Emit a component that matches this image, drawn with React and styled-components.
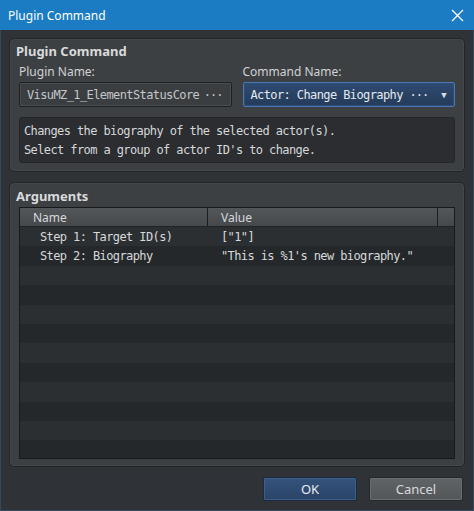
import React from 'react';
import styled, { createGlobalStyle } from 'styled-components';

const GlobalStyle = createGlobalStyle`
  html, body { margin: 0; padding: 0; background: #2f3236; }
  * { box-sizing: border-box; }
`;

const ui = `"Noto Sans", "Open Sans", "DejaVu Sans", sans-serif`;
const mono = `"DejaVu Sans Mono", "Liberation Mono", monospace`;

const Window = styled.div`
  width: 474px;
  height: 511px;
  display: flex;
  flex-direction: column;
  background: #2f3236;
  border-left: 1px solid #34495c;
  border-right: 1px solid #34495c;
  border-bottom: 1px solid #34495c;
  font-family: ${ui};
  color: #d4d6d8;
`;

const TitleBar = styled.div`
  height: 30px;
  flex: none;
  display: flex;
  align-items: center;
  justify-content: space-between;
  padding: 0 10px 0 8px;
  margin: 0 -1px;
  background: #1b7cc3;
  color: #ffffff;
  font-size: 12px;
`;

const Body = styled.div`
  flex: 1;
  display: flex;
  flex-direction: column;
  padding: 8px 8px 0 8px;
`;

const GroupBox = styled.div`
  height: ${(p) => p.h}px;
  margin-bottom: ${(p) => p.mb || 0}px;
  flex: none;
  display: flex;
  flex-direction: column;
  padding: 0 9px 7px 9px;
  background: #3d4043;
  border: 1px solid #222426;
  border-radius: 5px;
  box-shadow: inset 0 0 0 1px #45484b;
`;

const GroupTitle = styled.div`
  height: ${(p) => p.h || 22}px;
  display: flex;
  align-items: center;
  margin-left: -3px;
  padding-top: 2px;
  font-weight: 700;
  font-size: 13px;
  color: #d8dadc;
`;

const FieldRow = styled.div`
  display: flex;
  gap: 11px;
`;

const Field = styled.div`
  flex: 1;
  display: flex;
  flex-direction: column;
`;

const Label = styled.div`
  height: 21px;
  display: flex;
  align-items: center;
  font-size: 12px;
  color: #d0d2d4;
`;

const Input = styled.div`
  height: 25px;
  display: flex;
  align-items: center;
  justify-content: space-between;
  padding: 0 8px 0 7px;
  border: 1px solid ${(p) => (p.active ? '#4a78b4' : '#1f2123')};
  border-radius: 2px;
  background: ${(p) =>
    p.active
      ? 'linear-gradient(#2f4b70, #243b5a)'
      : '#3b3e41'};
  box-shadow: inset 0 0 0 1px ${(p) => (p.active ? '#2d4d78' : '#4a4d50')};
  font-family: ${mono};
  font-size: 12px;
  letter-spacing: -0.6px;
  color: ${(p) => (p.active ? '#e4e8ee' : '#c4c6c8')};
  white-space: nowrap;
`;

const Dots = styled.span`
  letter-spacing: -1px;
  color: inherit;
`;

const Arrow = styled.span`
  font-size: 9px;
  color: #d8dde5;
  margin-left: 10px;
`;

const Description = styled.div`
  margin-top: 10px;
  height: 46px;
  padding: 4px 0 0 4px;
  background: #2b2d30;
  border: 1px solid #232527;
  border-radius: 3px;
  font-family: ${mono};
  font-size: 12px;
  letter-spacing: -0.6px;
  line-height: 19px;
  color: #d6d8da;
  white-space: pre;
`;

const Table = styled.div`
  flex: 1;
  display: flex;
  flex-direction: column;
  border: 1px solid #18191a;
  background: #25282b;
  overflow: hidden;
`;

const HeaderRow = styled.div`
  height: 19px;
  flex: none;
  display: grid;
  grid-template-columns: 188px 1fr 16px;
  background: linear-gradient(#54575a, #46494c);
  border-bottom: 1px solid #202224;
`;

const HeaderCell = styled.div`
  display: flex;
  align-items: center;
  padding-left: 13px;
  font-size: 12px;
  color: #d6d8da;
  border-right: ${(p) => (p.last ? 'none' : '1px solid #1c1d1f')};
`;

const Row = styled.div`
  height: 19.4px;
  flex: none;
  display: grid;
  grid-template-columns: 188px 1fr;
  align-items: center;
  background: ${(p) => (p.odd ? '#25282b' : '#2c2f32')};
  font-family: ${mono};
  font-size: 12px;
  letter-spacing: -0.6px;
  color: #d6d8da;
  white-space: pre;
`;

const Cell = styled.div`
  padding-left: ${(p) => p.pl}px;
`;

const Footer = styled.div`
  height: 44px;
  flex: none;
  display: flex;
  justify-content: flex-end;
  align-items: flex-start;
  gap: 12px;
  padding: 10px 10px 0 0;
`;

const Button = styled.button`
  width: 94px;
  height: 24px;
  font-family: ${ui};
  font-size: 13px;
  color: ${(p) => (p.primary ? '#e8ecf2' : '#d8dadc')};
  border: 1px solid ${(p) => (p.primary ? '#1c2a3d' : '#262829')};
  border-radius: 2px;
  background: ${(p) =>
    p.primary
      ? 'linear-gradient(#34537c, #2a4466)'
      : 'linear-gradient(#616467, #535659)'};
  box-shadow: inset 0 0 0 1px ${(p) => (p.primary ? '#3e5f8a' : '#6a6d70')};
  padding: 0;
`;

const rows = [
  ['Step 1: Target ID(s)', '["1"]'],
  ['Step 2: Biography', '"This is %1\'s new biography."'],
];

export default function App() {
  const filler = Array.from({ length: 12 }, (_, i) => rows[i] || ['', '']);
  return (
    <Window>
      <GlobalStyle />
      <TitleBar>
        <span>Plugin Command</span>
        <svg width="13" height="13" viewBox="0 0 13 13">
          <path d="M1 1 L12 12 M12 1 L1 12" stroke="#fff" strokeWidth="1.3" />
        </svg>
      </TitleBar>
      <Body>
        <GroupBox h={134} mb={10}>
          <GroupTitle>Plugin Command</GroupTitle>
          <FieldRow>
            <Field>
              <Label>Plugin Name:</Label>
              <Input>
                <span>VisuMZ_1_ElementStatusCore</span>
                <Dots>···</Dots>
              </Input>
            </Field>
            <Field>
              <Label>Command Name:</Label>
              <Input active>
                <span>Actor: Change Biography <Dots>···</Dots></span>
                <Arrow>▼</Arrow>
              </Input>
            </Field>
          </FieldRow>
          <Description>
            {'Changes the biography of the selected actor(s).\nSelect from a group of actor ID\'s to change.'}
          </Description>
        </GroupBox>
        <GroupBox h={285}>
          <GroupTitle h={24}>Arguments</GroupTitle>
          <Table>
            <HeaderRow>
              <HeaderCell>Name</HeaderCell>
              <HeaderCell>Value</HeaderCell>
              <HeaderCell last />
            </HeaderRow>
            {filler.map(([n, v], i) => (
              <Row key={i} odd={i % 2 === 1}>
                <Cell pl={20}>{n}</Cell>
                <Cell pl={13}>{v}</Cell>
              </Row>
            ))}
          </Table>
        </GroupBox>
      </Body>
      <Footer>
        <Button primary>OK</Button>
        <Button>Cancel</Button>
      </Footer>
    </Window>
  );
}
